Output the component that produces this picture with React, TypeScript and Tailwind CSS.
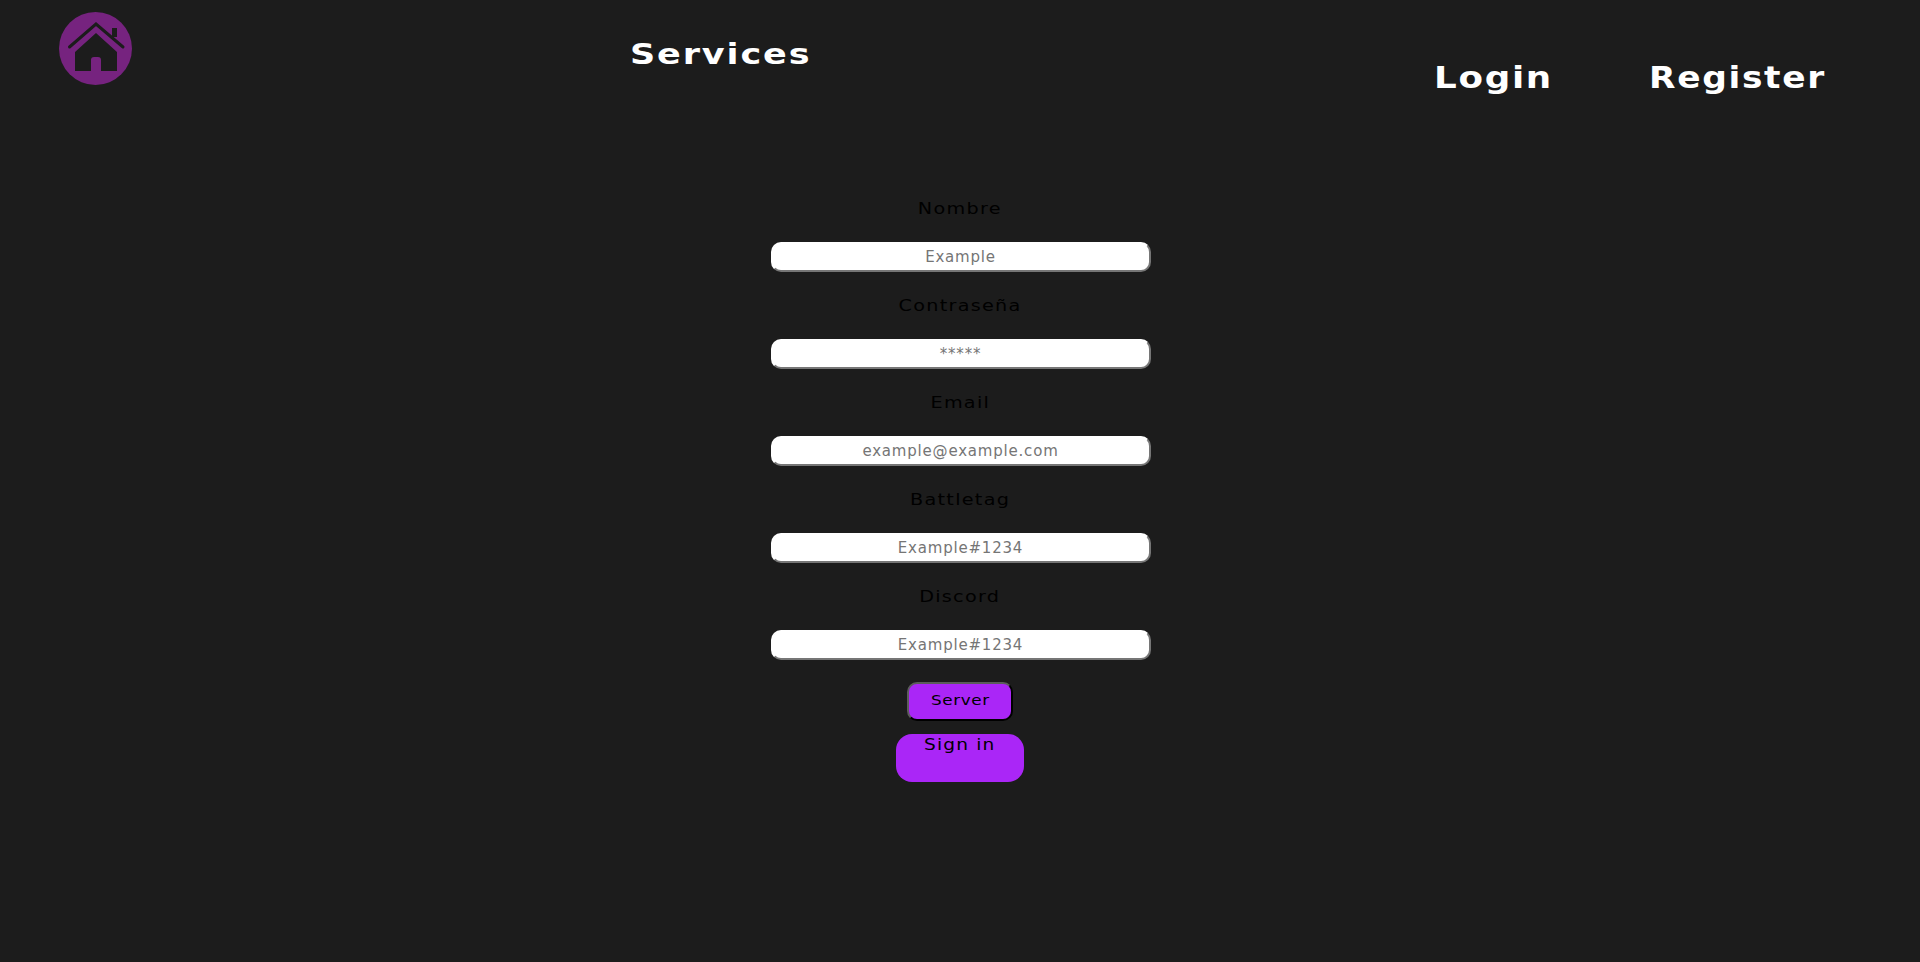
import React from 'react';

const fields = [
    { label: 'Nombre', placeholder: 'Example' },
    { label: 'Contraseña', placeholder: '*****' },
    { label: 'Email', placeholder: 'example@example.com' },
    { label: 'Battletag', placeholder: 'Example#1234' },
    { label: 'Discord', placeholder: 'Example#1234' },
];

const font = "font-['DejaVu_Sans',sans-serif]";

const HomeIcon = () => (
    <svg viewBox="0 0 73 73" className="w-[73px] h-[73px]">
        <circle cx="36.5" cy="36.5" r="36.5" fill="#76237f" />
        <path d="M10.5 35 L37 12 L64 35" fill="none" stroke="#1c1c1c" strokeWidth="3" strokeLinecap="round" />
        <rect x="53" y="16" width="5" height="9" fill="#1c1c1c" />
        <path d="M16 40 L37 21 L58 40 V59 H42 V48 Q42 45 39 45 H35 Q32 45 32 48 V59 H16 Z" fill="#1c1c1c" />
    </svg>
);

const App: React.FC = () => {
    return (
        <div className={`min-h-[962px] bg-[#1c1c1c] ${font}`}>
            {/* Header */}
            <header className="h-[172px] flex items-start pl-[59px] pr-[96px]">
                <a className="mt-3 block">
                    <HomeIcon />
                </a>
                <a className="ml-[498px] mt-[35px] w-[180px] text-[28px] leading-[40px] font-bold text-white tracking-[1.5px] whitespace-nowrap scale-x-[1.25] origin-left">
                    Services
                </a>
                <nav className="ml-auto mt-[57px] flex gap-[98px]">
                    <a className="w-[117px] text-[31px] leading-[40px] font-bold text-white tracking-[1.5px] scale-x-[1.15] origin-left">Login</a>
                    <a className="w-[175px] text-[31px] leading-[40px] font-bold text-white tracking-[1.5px] scale-x-[1.11] origin-left whitespace-nowrap">Register</a>
                </nav>
            </header>

            {/* Form */}
            <form className="flex flex-col items-center">
                {fields.map((field) => (
                    <div key={field.label} className="flex flex-col items-center">
                        <label className="h-[71px] pt-[27px] pb-[24px] leading-[20px] text-[15px] text-black tracking-[1px] scale-x-[1.28]">
                            {field.label}
                        </label>
                        <input
                            placeholder={field.placeholder}
                            className={`w-[380px] ml-[1px] h-[30px] -mt-[1px] mb-[-3px] pb-[1px] text-center text-[15px] tracking-[0.8px] bg-white text-black placeholder:text-[#757575] rounded-[10px] border-2 border-white border-r-[#767676] border-b-[#767676] outline-none ${font}`}
                        />
                    </div>
                ))}
                <button
                    type="button"
                    className={`w-[106px] h-[39px] mt-[25px] pb-[2px] text-[14px] tracking-[0.5px] text-black bg-[#aa26f7] rounded-[10px] border-2 border-[#5c5c5c] border-r-black border-b-black ${font}`}
                >
                    <span className="inline-block scale-x-[1.2]">Server</span>
                </button>
                <button
                    type="button"
                    className={`w-[128px] h-[48px] mt-[13px] pb-[27px] text-[16px] leading-[20px] tracking-[1px] text-black bg-[#aa26f7] rounded-[16px] ${font}`}
                >
                    <span className="inline-block scale-x-[1.16]">Sign in</span>
                </button>
            </form>
        </div>
    );
};

export default App;
